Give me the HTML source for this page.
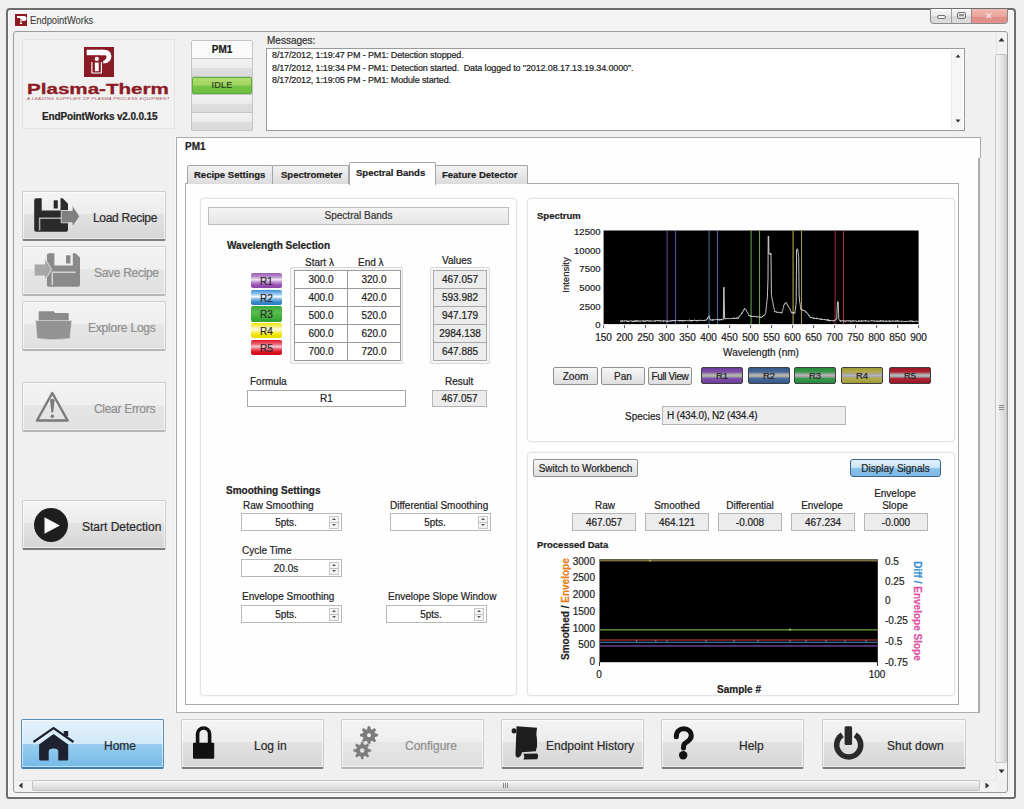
<!DOCTYPE html>
<html><head><meta charset="utf-8">
<style>
*{box-sizing:border-box;margin:0;padding:0}
html,body{width:1024px;height:809px;overflow:hidden;background:#efefef;font-family:"Liberation Sans",sans-serif;color:#222;-webkit-text-stroke:0.2px}
.a{position:absolute}
.t{position:absolute;white-space:nowrap;font-size:10px;line-height:12px;color:#222}
.b{font-weight:bold}
.c{text-align:center}
.win{left:6px;top:8px;width:1009.5px;height:791px;border:2px solid #6e6e6e;border-radius:4px 4px 3px 3px;background:#f3f3f3;box-shadow:inset 0 0 0 1px #fafafa}
.client{left:13px;top:31px;width:995px;height:762px;border:1.5px solid #9c9c9c;border-radius:3px;background:#f0f0f0}
.btn{position:absolute;border:1px solid #cdcdcd;border-bottom:2px solid #7c7c7c;border-radius:2px;background:linear-gradient(#f4f4f4 0,#ececec 46%,#e2e2e2 47%,#d6d6d6 100%);box-shadow:inset 0 0 0 1px rgba(255,255,255,0.55)}
.btn .l{position:absolute;white-space:nowrap;font-size:12px;line-height:14px;color:#2a2a2a}
.dis{border-bottom-color:#b5b5b5;background:linear-gradient(#f3f3f3 0,#efefef 46%,#e6e6e6 47%,#e0e0e0 100%)}
.dis .l{color:#8f8f8f}
.grp{position:absolute;border:1px solid #e4e4e4;border-radius:4px;background:#fefefe;box-shadow:0 0 0 1px #f6f6f6}
.box{position:absolute;border:1px solid #a9a9a9;background:#fff}
.ind{position:absolute;border:1px solid #b5b5b5;background:#ececec;font-size:10px;line-height:15px;text-align:center;color:#222}
.sb{position:absolute;border:1px solid #c0c0c0;border-radius:2px;background:linear-gradient(#f7f7f7,#dedede);font-size:10px;text-align:center;color:#222}
.rb{position:absolute;border:1px solid #666;border-radius:1px;font-size:10px;line-height:16px;text-align:center;color:#222}
</style></head><body>
<div class="a win"></div>
<!-- title bar -->
<svg class="a" style="left:15px;top:14px" width="12" height="12" viewBox="0 0 12 12"><rect x="0" y="0" width="12" height="12" fill="#8e1b22"/><path d="M2 2h7a2.5 2.5 0 0 1 0 5H7v3H5V4H2z" fill="#fff"/><rect x="5.6" y="5" width="0.9" height="4" fill="#8e1b22"/></svg>
<div class="t" style="left:30px;top:13.5px;font-size:11px;color:#3a3a3a;transform:scaleX(0.85);transform-origin:left;-webkit-text-stroke:0.1px">EndpointWorks</div>
<div class="a" style="left:930px;top:9px;width:78px;height:15px;border:1px solid #8c8c8c;border-top:none;border-radius:0 0 4px 4px;overflow:hidden;background:linear-gradient(#fbfbfb,#e8e8e8 50%,#d8d8d8 52%,#dcdcdc)">
  <div class="a" style="left:20px;top:0;width:1px;height:15px;background:#a0a0a0"></div>
  <div class="a" style="left:40px;top:0;width:37px;height:15px;background:linear-gradient(#f0b8b0,#e8a49c 50%,#e08a82 52%,#e4948c);border-left:1px solid #a08080"></div>
  <div class="a" style="left:6px;top:6px;width:9px;height:4px;border:1px solid #707070;border-radius:2px;background:#f4f4f4"></div>
  <div class="a" style="left:26px;top:3px;width:9px;height:7px;border:1px solid #707070;border-radius:2px"></div>
  <div class="a" style="left:28px;top:5px;width:5px;height:2px;border:1px solid #909090"></div>
  <div class="t" style="left:54px;top:1px;font-size:9px;color:#f8e8e8">✕</div>
</div>
<div class="a client"></div>
<!-- right vertical scrollbar -->
<div class="a" style="left:996px;top:33px;width:11px;height:746px;background:#f2f2f2;border-left:1px solid #e4e4e4"></div>
<svg class="a" style="left:998px;top:37px" width="7" height="5"><path d="M0.5,4.5 L3.5,0.8 L6.5,4.5Z" fill="#333"/></svg>
<div class="a" style="left:995px;top:54px;width:12px;height:709px;border:1px solid #c4c4c4;border-radius:2px;background:linear-gradient(90deg,#f8f8f8,#e6e6e6 50%,#d4d4d4)"></div>
<div class="a" style="left:999px;top:405px;width:5px;height:1px;background:#888;box-shadow:0 2px 0 #888,0 4px 0 #888"></div>
<svg class="a" style="left:998px;top:769px" width="7" height="5"><path d="M0.5,0.5 L3.5,4.2 L6.5,0.5Z" fill="#333"/></svg>
<!-- bottom horizontal scrollbar -->
<div class="a" style="left:15px;top:780px;width:981px;height:11px;background:#f2f2f2;border-top:1px solid #e4e4e4"></div>
<svg class="a" style="left:18px;top:782px" width="5" height="7"><path d="M4.5,0.5 L0.8,3.5 L4.5,6.5Z" fill="#333"/></svg>
<div class="a" style="left:32px;top:780px;width:948px;height:11px;border:1px solid #c4c4c4;border-radius:2px;background:linear-gradient(#f8f8f8,#e6e6e6 50%,#d4d4d4)"></div>
<div class="a" style="left:503px;top:783px;width:1px;height:5px;background:#888;box-shadow:2px 0 0 #888,4px 0 0 #888"></div>
<svg class="a" style="left:985px;top:782px" width="5" height="7"><path d="M0.5,0.5 L4.2,3.5 L0.5,6.5Z" fill="#333"/></svg>

<!-- logo panel -->
<div class="a" style="left:22px;top:39px;width:153px;height:90px;border:1px solid #e4e4e4;background:#f1f1f1"></div>
<svg class="a" style="left:83.5px;top:47px" width="30" height="30" viewBox="0 0 30 30"><rect width="30" height="30" fill="#8a1a24"/><rect x="2.7" y="2.7" width="16" height="5.5" fill="#fff"/><path d="M17,2.7 H20.5 C25,2.7 27.4,6 27.4,9.5 C27.4,13 24.5,16.5 19.2,16.5 L19.2,14 C21.5,13 22.5,11.5 22.5,10 C22.5,9 22,8.2 21,8.2 H17Z" fill="#fff"/><path d="M7.9,15 V26 H17.4 V15" fill="none" stroke="#fff" stroke-width="1.1"/><circle cx="12.8" cy="11.9" r="2.1" fill="#fff"/><rect x="10.9" y="15.5" width="3.8" height="8.7" fill="#fff"/></svg>
<div class="t b" style="left:27px;top:80.5px;font-size:14px;line-height:16px;color:#8c1a24;letter-spacing:0px;transform:scaleX(1.47);transform-origin:left;-webkit-text-stroke:0.3px #8c1a24">Plasma-Therm</div>
<div class="t" style="left:27px;top:96px;font-size:4px;line-height:5px;color:#a05058;font-style:italic;letter-spacing:0.3px;transform:scaleX(1.14);transform-origin:left;-webkit-text-stroke:0">A LEADING SUPPLIER OF PLASMA PROCESS EQUIPMENT</div>
<div class="t b" style="left:42px;top:111px;font-size:10px;line-height:12px;color:#222;letter-spacing:-0.15px">EndPointWorks v2.0.0.15</div>

<!-- PM1 status column -->
<div class="a" style="left:191px;top:40px;width:62px;height:91px;border:1px solid #c4c4c4;border-radius:2px;background:#c4c4c4"></div>
<div class="a c b" style="left:192px;top:41px;width:60px;height:17px;background:#fafafa;font-size:10px;line-height:18px;color:#1a1a1a">PM1</div>
<div class="a" style="left:192px;top:59px;width:60px;height:17px;background:linear-gradient(#f2f2f2,#ececec 50%,#dedede 52%,#dadada)"></div>
<div class="a c" style="left:192px;top:77px;width:60px;height:17px;border:1px solid #58b03a;border-radius:2px;background:linear-gradient(#b0dc70,#a0d460 48%,#78c448 52%,#6cc040);font-size:9px;line-height:15px;color:#2a3a20;letter-spacing:0.3px">IDLE</div>
<div class="a" style="left:192px;top:95px;width:60px;height:17px;background:linear-gradient(#f2f2f2,#ececec 50%,#dedede 52%,#dadada)"></div>
<div class="a" style="left:192px;top:113px;width:60px;height:17px;background:linear-gradient(#f2f2f2,#ececec 50%,#dedede 52%,#dadada)"></div>

<!-- messages -->
<div class="t" style="left:267px;top:35px;font-size:10px;color:#333">Messages:</div>
<div class="box" style="left:266px;top:48px;width:699px;height:83px;border:1.5px solid #9a9a9a"></div>
<div class="a" style="left:951px;top:50px;width:12px;height:79px;background:#f6f6f6;border-left:1px solid #ececec"></div>
<svg class="a" style="left:955px;top:54px" width="6" height="4"><path d="M0.5,3.5 L3,0.5 L5.5,3.5Z" fill="#333"/></svg>
<svg class="a" style="left:955px;top:119px" width="6" height="4"><path d="M0.5,0.5 L3,3.5 L5.5,0.5Z" fill="#333"/></svg>
<div class="t" style="left:272px;top:49px;font-size:9px;line-height:12.5px;color:#222;letter-spacing:-0.13px">8/17/2012, 1:19:47 PM - PM1: Detection stopped.<br>8/17/2012, 1:19:34 PM - PM1: Detection started.&nbsp; Data logged to "2012.08.17.13.19.34.0000".<br>8/17/2012, 1:19:05 PM - PM1: Module started.</div>
<!-- left buttons -->
<div class="btn" style="left:22px;top:191px;width:144px;height:50px"><div class="l" style="left:70px;top:19px;letter-spacing:-0.3px">Load Recipe</div></div>
<div class="btn dis" style="left:22px;top:246px;width:144px;height:50px"><div class="l" style="left:71px;top:19px;letter-spacing:-0.3px">Save Recipe</div></div>
<div class="btn dis" style="left:22px;top:301px;width:144px;height:50px"><div class="l" style="left:65px;top:19px;letter-spacing:-0.2px">Explore Logs</div></div>
<div class="btn dis" style="left:22px;top:382px;width:144px;height:50px"><div class="l" style="left:71px;top:19px;letter-spacing:-0.3px">Clear Errors</div></div>
<div class="btn" style="left:22px;top:500px;width:144px;height:50px"><div class="l" style="left:59px;top:19px">Start Detection</div></div>
<!-- bottom buttons -->
<div class="btn" style="left:21px;top:719px;width:143px;height:50px;border:1px solid #5a8cb4;border-bottom:2px solid #3f7eb2;background:linear-gradient(#e6f3fb 0,#d0e8f7 50%,#98cdf0 52%,#74bae8 100%)"><div class="l" style="left:82px;top:19px">Home</div></div>
<div class="btn" style="left:181px;top:719px;width:143px;height:50px"><div class="l" style="left:72px;top:19px">Log in</div></div>
<div class="btn dis" style="left:341px;top:719px;width:143px;height:50px"><div class="l" style="left:63px;top:19px">Configure</div></div>
<div class="btn" style="left:501px;top:719px;width:143px;height:50px"><div class="l" style="left:44px;top:19px">Endpoint History</div></div>
<div class="btn" style="left:661px;top:719px;width:143px;height:50px"><div class="l" style="left:77px;top:19px">Help</div></div>
<div class="btn" style="left:822px;top:719px;width:144px;height:50px"><div class="l" style="left:64px;top:19px">Shut down</div></div>
<svg class="a" style="left:0;top:0" width="1024" height="809" viewBox="0 0 1024 809">
<g id="load">
<path d="M36.2,198.2 H41.7 V210.5 H60.5 V198.2 H62.6 L68,203.7 V229.7 Q68,231.7 66,231.7 H36.2 Q34.2,231.7 34.2,229.7 V200.2 Q34.2,198.2 36.2,198.2Z" fill="#2a2a2a"/>
<rect x="53.7" y="200.3" width="4.1" height="8.2" fill="#2a2a2a"/>
<path d="M39.6,230.5 V218.3 H62" stroke="#b0b0b0" stroke-width="1.5" fill="none"/>
<path d="M61.2,210.5 H72.2 V205 L79.7,216.3 L72.2,227.6 V222.8 H61.2Z" fill="#808080" stroke="#f0f0f0" stroke-width="0.8"/>
</g>
<g id="save">
<path d="M48.9,253.2 H54.4 V265.5 H72.8 V253.2 H75.6 L80,257.6 V284.7 Q80,286.7 78,286.7 H48.9 Q46.9,286.7 46.9,284.7 V255.2 Q46.9,253.2 48.9,253.2Z" fill="#8a8a8a"/>
<rect x="66" y="255.3" width="4.5" height="8.2" fill="#8a8a8a"/>
<path d="M52.3,285 V272.3 H75.6" stroke="#d4d4d4" stroke-width="1.5" fill="none"/>
<path d="M34.2,264.1 H44.8 V258 L51.7,269.3 L44.8,280.5 V276.1 H34.2Z" fill="#a8a8a8" stroke="#ececec" stroke-width="0.8"/>
</g>
<g id="folder" fill="#8c8c8c">
<path d="M39.5,311.3 H53.8 L55,313 H67.7 Q68.7,313 68.7,314 V321 H38.7 V312.3 Q38.7,311.3 39.5,311.3Z"/>
<path d="M35.6,320.5 H71.8 L70,338.5 Q53,341 37,338.5Z" fill="#939393" stroke="#e8e8e8" stroke-width="0.6"/>
</g>
<g id="warn">
<path d="M52.3,393 L37,420.5 H67.6Z" fill="none" stroke="#7a7a7a" stroke-width="2.4" stroke-linejoin="round"/>
<path d="M50,400.5 Q50,398.8 52.3,398.8 Q54.6,398.8 54.6,400.5 L53.2,412.5 H51.4Z" fill="#7a7a7a"/>
<circle cx="52.3" cy="416.2" r="1.7" fill="#7a7a7a"/>
</g>
<g id="play">
<circle cx="51" cy="525" r="17" fill="#1e1e1e"/>
<path d="M44.5,517.3 V533.7 L59.9,525.5Z" fill="#fafafa"/>
</g>
<g id="home" fill="#1e2230">
<path d="M33.5,742 L53.5,728 L73.5,742" fill="none" stroke="#1e2230" stroke-width="2.2" stroke-linejoin="miter"/>
<path d="M53.5,728 L33.5,742" fill="none" stroke="#f4fafd" stroke-width="0.8" transform="translate(0,2.6)"/>
<rect x="63.7" y="731" width="4.5" height="5" />
<path d="M53.5,734 L68.2,744.4 V759 Q68.2,760.5 66.7,760.5 H58.3 V751.5 Q58.3,748.5 53.5,748.5 Q48.7,748.5 48.7,751.5 V760.5 H40.6 Q39.1,760.5 39.1,759 V744.4Z"/>
</g>
<g id="lock">
<path d="M197.6,743 V734 A6,6 0 0 1 209.6,734 V743" fill="none" stroke="#111" stroke-width="3.6"/>
<rect x="193" y="742.7" width="21.2" height="16" rx="0.8" fill="#111"/>
</g>
<g id="gears" fill="#7c7c7c">
<path fill-rule="evenodd" d="M375.02,733.34 L377.92,734.03 L377.92,736.37 L375.02,737.06 L374.57,738.14 L376.14,740.69 L374.49,742.34 L371.94,740.77 L370.86,741.22 L370.17,744.12 L367.83,744.12 L367.14,741.22 L366.06,740.77 L363.51,742.34 L361.86,740.69 L363.43,738.14 L362.98,737.06 L360.08,736.37 L360.08,734.03 L362.98,733.34 L363.43,732.26 L361.86,729.71 L363.51,728.06 L366.06,729.63 L367.14,729.18 L367.83,726.28 L370.17,726.28 L370.86,729.18 L371.94,729.63 L374.49,728.06 L376.14,729.71 L374.57,732.26Z M371,735.2 A2,2 0 1 0 367,735.2 A2,2 0 1 0 371,735.2Z"/>
<path fill-rule="evenodd" d="M368.31,748.61 L371.32,749.31 L371.32,751.69 L368.31,752.39 L367.86,753.49 L369.49,756.11 L367.81,757.79 L365.19,756.16 L364.09,756.61 L363.39,759.62 L361.01,759.62 L360.31,756.61 L359.21,756.16 L356.59,757.79 L354.91,756.11 L356.54,753.49 L356.09,752.39 L353.08,751.69 L353.08,749.31 L356.09,748.61 L356.54,747.51 L354.91,744.89 L356.59,743.21 L359.21,744.84 L360.31,744.39 L361.01,741.38 L363.39,741.38 L364.09,744.39 L365.19,744.84 L367.81,743.21 L369.49,744.89 L367.86,747.51Z M364.2,750.5 A2,2 0 1 0 360.2,750.5 A2,2 0 1 0 364.2,750.5Z" stroke="#e6e6e6" stroke-width="0.6"/>
</g>
<g id="scroll" fill="#1e1e1e">
<path d="M516.5,726.3 L537,727.8 Q535.8,734 537,740 Q537.8,746 535.8,751.3 L522,752.3 Q521,756.5 518.5,757.5 Q515.5,758 515.5,754 L516.5,726.3Z"/>
<ellipse cx="514" cy="730.8" rx="2.4" ry="2.6"/>
<path d="M523.5,753.8 L537.3,753.4 Q539,756.4 537,759.2 L523.5,759.6 Q525,756.6 523.5,753.8Z"/>
</g>
<g id="help">
<path d="M676.3,736.8 C676.3,731.5 679.8,728.8 683.8,728.8 C688.3,728.8 691.3,731.8 691.3,735.8 C691.3,740 687.8,741.3 685,743.3 C683.7,744.3 683.5,745.3 683.5,748" fill="none" stroke="#111" stroke-width="5" stroke-linecap="round"/>
<circle cx="683.2" cy="755.3" r="4.2" fill="#111"/>
</g>
<g id="power">
<path d="M842.3,734.8 A12,12 0 1 0 855.1,734.8" fill="none" stroke="#2a2a2a" stroke-width="5.6"/>
<rect x="844.6" y="726.3" width="7.5" height="18.7" rx="1.5" fill="#2a2a2a"/>
</g>
</svg>
<!-- PM1 panel -->
<div class="a" style="left:176px;top:137px;width:805px;height:576px;border:1.5px solid #acacac;border-right:none;background:#fefefe;box-shadow:-1px 0 0 #f8f8f8"></div><div class="a" style="left:979.5px;top:137px;width:1.5px;height:20.5px;background:#acacac"></div><div class="a" style="left:978px;top:157.5px;width:1.5px;height:555.5px;background:#acacac"></div><div class="a" style="left:979.5px;top:157.5px;width:1.5px;height:555.5px;background:#f0f0f0"></div>
<div class="t b" style="left:185px;top:141px;font-size:10px">PM1</div>
<!-- tabs -->
<div class="a" style="left:185px;top:183px;width:774px;height:522px;border:1.5px solid #a8a8a8;background:#fefefe"></div>
<div class="a" style="left:187px;top:165px;width:86px;height:19px;border:1px solid #a4a4a4;border-bottom:none;border-radius:2px 2px 0 0;background:linear-gradient(#f2f2f2,#dcdcdc)"></div>
<div class="t b" style="left:194px;top:169px;font-size:9.5px">Recipe Settings</div>
<div class="a" style="left:272px;top:165px;width:77px;height:19px;border:1px solid #a4a4a4;border-bottom:none;border-radius:2px 2px 0 0;background:linear-gradient(#f2f2f2,#dcdcdc)"></div>
<div class="t b" style="left:281px;top:169px;font-size:9.5px">Spectrometer</div>
<div class="a" style="left:435px;top:165px;width:93px;height:19px;border:1px solid #a4a4a4;border-bottom:none;border-radius:2px 2px 0 0;background:linear-gradient(#f2f2f2,#dcdcdc)"></div>
<div class="t b" style="left:442px;top:169px;font-size:9.5px">Feature Detector</div>
<div class="a" style="left:349px;top:162px;width:87px;height:23px;border:1px solid #a4a4a4;border-bottom:none;border-radius:2px 2px 0 0;background:#fefefe"></div>
<div class="t b" style="left:356px;top:167px;font-size:9.5px">Spectral Bands</div>

<!-- left group -->
<div class="grp" style="left:200px;top:198px;width:317px;height:498px"></div>
<div class="a c" style="left:208px;top:207px;width:301px;height:18px;border:1px solid #bdbdbd;background:linear-gradient(#f4f4f4,#e6e6e6);font-size:10px;line-height:16px;color:#333">Spectral Bands</div>
<div class="t b" style="left:227px;top:240px">Wavelength Selection</div>
<div class="t" style="left:305px;top:257px">Start λ</div>
<div class="t" style="left:358px;top:257px">End λ</div>
<div class="t" style="left:442px;top:255px">Values</div>
<!-- band color labels -->
<div class="rb" style="left:251px;top:272.5px;width:31px;height:15.5px;border:none;border-radius:2px;line-height:18px;font-size:10px;color:#2a2a2a;background:linear-gradient(#9c58b8,#b890cc 25%,#f2e6f2 45%,#c898d8 58%,#9a50b4 80%,#8c44a8)">R1</div>
<div class="rb" style="left:251px;top:289.5px;width:31px;height:15.5px;border:none;border-radius:2px;line-height:18px;font-size:10px;color:#2a2a2a;background:linear-gradient(#3c8cd4,#98c8ee 28%,#ffffff 45%,#8cc0ea 58%,#3a88cc 80%,#2e7cc0)">R2</div>
<div class="rb" style="left:251px;top:306.3px;width:31px;height:15.5px;border:none;border-radius:2px;line-height:18px;font-size:10px;color:#2a2a2a;background:linear-gradient(#3aaa3a,#58bc50 40%,#48b440 60%,#30a030)">R3</div>
<div class="rb" style="left:251px;top:322.7px;width:31px;height:15.5px;border:none;border-radius:2px;line-height:18px;font-size:10px;color:#2a2a2a;background:linear-gradient(#f0e400,#f8f090 28%,#fffce8 45%,#f8f060 60%,#f0e400 80%,#e8dc00)">R4</div>
<div class="rb" style="left:251px;top:339.7px;width:31px;height:15.5px;border:none;border-radius:2px;line-height:18px;font-size:10px;color:#2a2a2a;background:linear-gradient(#dc1424,#ec6878 28%,#f6ccd4 45%,#ec6070 60%,#dc1020 80%,#d00c1c)">R5</div>
<!-- table -->
<div class="a" style="left:290px;top:267px;width:113px;height:97px;border:1px solid #d8d8d8;border-radius:2px;background:#f6f6f6"></div>
<div class="a" style="left:430px;top:267px;width:60px;height:97px;border:1px solid #d8d8d8;border-radius:2px;background:#f6f6f6"></div>
<div id="tbl"></div>
<div class="box c" style="left:294px;top:270px;width:54px;height:19px;border-color:#9a9a9a;font-size:10px;line-height:17px">300.0</div>
<div class="box c" style="left:347px;top:270px;width:54px;height:19px;border-color:#9a9a9a;font-size:10px;line-height:17px">320.0</div>
<div class="ind" style="left:433px;top:270px;width:54px;height:19px;border-color:#a8a8a8;line-height:17px">467.057</div>
<div class="box c" style="left:294px;top:288px;width:54px;height:19px;border-color:#9a9a9a;font-size:10px;line-height:17px">400.0</div>
<div class="box c" style="left:347px;top:288px;width:54px;height:19px;border-color:#9a9a9a;font-size:10px;line-height:17px">420.0</div>
<div class="ind" style="left:433px;top:288px;width:54px;height:19px;border-color:#a8a8a8;line-height:17px">593.982</div>
<div class="box c" style="left:294px;top:306px;width:54px;height:19px;border-color:#9a9a9a;font-size:10px;line-height:17px">500.0</div>
<div class="box c" style="left:347px;top:306px;width:54px;height:19px;border-color:#9a9a9a;font-size:10px;line-height:17px">520.0</div>
<div class="ind" style="left:433px;top:306px;width:54px;height:19px;border-color:#a8a8a8;line-height:17px">947.179</div>
<div class="box c" style="left:294px;top:324px;width:54px;height:19px;border-color:#9a9a9a;font-size:10px;line-height:17px">600.0</div>
<div class="box c" style="left:347px;top:324px;width:54px;height:19px;border-color:#9a9a9a;font-size:10px;line-height:17px">620.0</div>
<div class="ind" style="left:433px;top:324px;width:54px;height:19px;border-color:#a8a8a8;line-height:17px">2984.138</div>
<div class="box c" style="left:294px;top:342px;width:54px;height:19px;border-color:#9a9a9a;font-size:10px;line-height:17px">700.0</div>
<div class="box c" style="left:347px;top:342px;width:54px;height:19px;border-color:#9a9a9a;font-size:10px;line-height:17px">720.0</div>
<div class="ind" style="left:433px;top:342px;width:54px;height:19px;border-color:#a8a8a8;line-height:17px">647.885</div>
<div class="t" style="left:250px;top:376px">Formula</div>
<div class="box c" style="left:247px;top:390px;width:159px;height:17px;border-color:#a8a8a8;font-size:10px;line-height:15px">R1</div>
<div class="t" style="left:445px;top:376px">Result</div>
<div class="ind" style="left:432px;top:390px;width:55px;height:17px;line-height:15px">467.057</div>

<div class="t b" style="left:226px;top:485px">Smoothing Settings</div>
<div class="t" style="left:243px;top:500px">Raw Smoothing</div>
<div class="t" style="left:390px;top:500px">Differential Smoothing</div>
<div class="t" style="left:242px;top:545px">Cycle Time</div>
<div class="t" style="left:242px;top:591px">Envelope Smoothing</div>
<div class="t" style="left:388px;top:591px">Envelope Slope Window</div>
<div class="box" style="left:241px;top:513px;width:101px;height:18px;border:1.5px solid #b8b8b8"><div class="t c" style="left:0;top:2.5px;width:88px">5pts.</div><div class="a" style="left:87px;top:1.5px;width:10px;height:13px;border:1px solid #c8c8c8;background:#f4f4f4"></div><div class="a" style="left:89.5px;top:4px;width:0;height:0;border:2.5px solid transparent;border-bottom:2.5px solid #556;border-top:none"></div><div class="a" style="left:89.5px;top:10px;width:0;height:0;border:2.5px solid transparent;border-top:2.5px solid #556;border-bottom:none"></div><div class="a" style="left:88px;top:7.5px;width:8px;height:1px;background:#c0c0c0"></div></div>
<div class="box" style="left:390px;top:513px;width:101px;height:18px;border:1.5px solid #b8b8b8"><div class="t c" style="left:0;top:2.5px;width:88px">5pts.</div><div class="a" style="left:87px;top:1.5px;width:10px;height:13px;border:1px solid #c8c8c8;background:#f4f4f4"></div><div class="a" style="left:89.5px;top:4px;width:0;height:0;border:2.5px solid transparent;border-bottom:2.5px solid #556;border-top:none"></div><div class="a" style="left:89.5px;top:10px;width:0;height:0;border:2.5px solid transparent;border-top:2.5px solid #556;border-bottom:none"></div><div class="a" style="left:88px;top:7.5px;width:8px;height:1px;background:#c0c0c0"></div></div>
<div class="box" style="left:241px;top:559px;width:101px;height:18px;border:1.5px solid #b8b8b8"><div class="t c" style="left:0;top:2.5px;width:88px">20.0s</div><div class="a" style="left:87px;top:1.5px;width:10px;height:13px;border:1px solid #c8c8c8;background:#f4f4f4"></div><div class="a" style="left:89.5px;top:4px;width:0;height:0;border:2.5px solid transparent;border-bottom:2.5px solid #556;border-top:none"></div><div class="a" style="left:89.5px;top:10px;width:0;height:0;border:2.5px solid transparent;border-top:2.5px solid #556;border-bottom:none"></div><div class="a" style="left:88px;top:7.5px;width:8px;height:1px;background:#c0c0c0"></div></div>
<div class="box" style="left:241px;top:605px;width:101px;height:18px;border:1.5px solid #b8b8b8"><div class="t c" style="left:0;top:2.5px;width:88px">5pts.</div><div class="a" style="left:87px;top:1.5px;width:10px;height:13px;border:1px solid #c8c8c8;background:#f4f4f4"></div><div class="a" style="left:89.5px;top:4px;width:0;height:0;border:2.5px solid transparent;border-bottom:2.5px solid #556;border-top:none"></div><div class="a" style="left:89.5px;top:10px;width:0;height:0;border:2.5px solid transparent;border-top:2.5px solid #556;border-bottom:none"></div><div class="a" style="left:88px;top:7.5px;width:8px;height:1px;background:#c0c0c0"></div></div>
<div class="box" style="left:386px;top:605px;width:101px;height:18px;border:1.5px solid #b8b8b8"><div class="t c" style="left:0;top:2.5px;width:88px">5pts.</div><div class="a" style="left:87px;top:1.5px;width:10px;height:13px;border:1px solid #c8c8c8;background:#f4f4f4"></div><div class="a" style="left:89.5px;top:4px;width:0;height:0;border:2.5px solid transparent;border-bottom:2.5px solid #556;border-top:none"></div><div class="a" style="left:89.5px;top:10px;width:0;height:0;border:2.5px solid transparent;border-top:2.5px solid #556;border-bottom:none"></div><div class="a" style="left:88px;top:7.5px;width:8px;height:1px;background:#c0c0c0"></div></div>
<!-- spectrum group -->
<div class="grp" style="left:527px;top:198px;width:428px;height:244px"></div>
<div class="t b" style="left:537px;top:210px;font-size:9.5px">Spectrum</div>
<div class="t" style="right:423.5px;top:225.8px;text-align:right;font-size:9.5px">12500</div>
<div class="t" style="right:423.5px;top:244.5px;text-align:right;font-size:9.5px">10000</div>
<div class="t" style="right:423.5px;top:263.2px;text-align:right;font-size:9.5px">7500</div>
<div class="t" style="right:423.5px;top:282.0px;text-align:right;font-size:9.5px">5000</div>
<div class="t" style="right:423.5px;top:300.7px;text-align:right;font-size:9.5px">2500</div>
<div class="t" style="right:423.5px;top:319.4px;text-align:right;font-size:9.5px">0</div>
<div class="t" style="left:541px;top:269px;width:50px;text-align:center;transform:rotate(-90deg);font-size:9.5px">Intensity</div>
<svg class="a" style="left:560px;top:220px" width="380" height="120" viewBox="560 220 380 120"><rect x="603.6" y="230.5" width="315.0" height="93.60000000000002" fill="#000"/><line x1="667.1" y1="230.5" x2="667.1" y2="324.1" stroke="#6c3c98" stroke-width="1.1"/><line x1="675.5" y1="230.5" x2="675.5" y2="324.1" stroke="#5c4c9c" stroke-width="1.1"/><line x1="709.1" y1="230.5" x2="709.1" y2="324.1" stroke="#3c6498" stroke-width="1.1"/><line x1="717.5" y1="230.5" x2="717.5" y2="324.1" stroke="#4a64a0" stroke-width="1.1"/><line x1="751.1" y1="230.5" x2="751.1" y2="324.1" stroke="#5c9c44" stroke-width="1.1"/><line x1="759.5" y1="230.5" x2="759.5" y2="324.1" stroke="#64a040" stroke-width="1.1"/><line x1="793.1" y1="230.5" x2="793.1" y2="324.1" stroke="#b0a848" stroke-width="1.1"/><line x1="801.5" y1="230.5" x2="801.5" y2="324.1" stroke="#a09050" stroke-width="1.1"/><line x1="835.1" y1="230.5" x2="835.1" y2="324.1" stroke="#982838" stroke-width="1.1"/><line x1="843.5" y1="230.5" x2="843.5" y2="324.1" stroke="#a83040" stroke-width="1.1"/><polyline points="620.4,320.5 620.6,321.9 620.8,321.0 621.0,321.3 621.2,321.2 621.5,321.2 621.7,321.7 621.9,321.2 622.1,321.4 622.3,320.1 622.5,321.0 622.7,321.2 622.9,321.2 623.1,321.3 623.3,321.4 623.6,321.2 623.8,320.9 624.0,321.2 624.2,320.8 624.4,321.2 624.6,321.1 624.8,320.6 625.0,320.9 625.2,321.2 625.4,321.1 625.6,320.9 625.9,320.5 626.1,321.2 626.3,321.2 626.5,320.8 626.7,321.3 626.9,321.2 627.1,320.8 627.3,320.9 627.5,321.1 627.8,320.9 628.0,321.9 628.2,320.8 628.4,321.4 628.6,321.6 628.8,321.0 629.0,320.9 629.2,321.2 629.4,321.4 629.6,321.1 629.9,321.1 630.1,320.7 630.3,320.8 630.5,321.0 630.7,320.7 630.9,321.1 631.1,321.3 631.3,320.9 631.5,320.9 631.7,321.1 632.0,321.3 632.2,321.0 632.4,321.8 632.6,320.9 632.8,320.9 633.0,321.6 633.2,321.0 633.4,321.4 633.6,320.8 633.8,321.7 634.1,321.3 634.3,320.8 634.5,320.7 634.7,321.7 634.9,321.2 635.1,321.0 635.3,321.2 635.5,320.6 635.7,321.4 635.9,320.9 636.1,321.4 636.4,320.6 636.6,321.1 636.8,321.2 637.0,321.6 637.2,320.5 637.4,320.8 637.6,320.8 637.8,320.7 638.0,320.9 638.2,321.2 638.5,321.3 638.7,321.3 638.9,320.6 639.1,321.5 639.3,321.2 639.5,321.1 639.7,321.0 639.9,320.9 640.1,321.4 640.4,321.6 640.6,321.0 640.8,320.7 641.0,320.8 641.2,321.0 641.4,321.1 641.6,320.9 641.8,321.1 642.0,320.8 642.2,321.3 642.5,321.0 642.7,321.1 642.9,320.9 643.1,321.0 643.3,320.3 643.5,320.6 643.7,320.6 643.9,321.6 644.1,321.1 644.3,321.2 644.6,320.9 644.8,321.7 645.0,320.7 645.2,320.7 645.4,321.4 645.6,321.3 645.8,321.3 646.0,321.0 646.2,320.8 646.4,320.4 646.6,321.1 646.9,320.8 647.1,321.0 647.3,320.5 647.5,320.8 647.7,320.6 647.9,321.3 648.1,321.1 648.3,321.3 648.5,320.6 648.8,320.8 649.0,321.1 649.2,321.1 649.4,320.9 649.6,321.2 649.8,321.3 650.0,320.9 650.2,320.3 650.4,321.1 650.6,321.2 650.9,321.4 651.1,321.4 651.3,320.8 651.5,320.7 651.7,321.0 651.9,320.9 652.1,321.0 652.3,321.0 652.5,321.5 652.7,321.1 653.0,321.0 653.2,321.2 653.4,321.1 653.6,321.2 653.8,321.1 654.0,320.7 654.2,321.1 654.4,321.0 654.6,320.8 654.8,320.8 655.1,320.5 655.3,321.6 655.5,320.7 655.7,321.1 655.9,320.9 656.1,320.7 656.3,320.7 656.5,320.7 656.7,320.9 656.9,320.5 657.1,321.1 657.4,321.0 657.6,320.7 657.8,321.1 658.0,320.3 658.2,320.7 658.4,320.3 658.6,321.0 658.8,321.1 659.0,320.9 659.2,320.8 659.5,321.2 659.7,320.9 659.9,321.0 660.1,320.5 660.3,321.2 660.5,320.7 660.7,321.2 660.9,321.3 661.1,321.2 661.4,321.3 661.6,320.9 661.8,320.7 662.0,320.9 662.2,320.8 662.4,320.5 662.6,320.9 662.8,320.9 663.0,321.0 663.2,321.4 663.5,320.7 663.7,321.5 663.9,320.8 664.1,321.0 664.3,320.6 664.5,321.0 664.7,321.2 664.9,320.9 665.1,321.1 665.3,321.0 665.6,320.9 665.8,321.0 666.0,321.0 666.2,321.2 666.4,321.0 666.6,321.6 666.8,321.0 667.0,321.3 667.2,320.6 667.4,320.6 667.6,321.5 667.9,320.9 668.1,321.0 668.3,321.2 668.5,320.8 668.7,321.1 668.9,321.4 669.1,321.0 669.3,321.0 669.5,320.9 669.8,321.3 670.0,320.7 670.2,320.7 670.4,321.2 670.6,321.1 670.8,320.9 671.0,321.1 671.2,320.4 671.4,320.8 671.6,321.2 671.9,321.1 672.1,320.9 672.3,320.2 672.5,320.9 672.7,320.8 672.9,320.7 673.1,320.9 673.3,320.2 673.5,321.0 673.7,320.6 674.0,320.8 674.2,320.7 674.4,321.2 674.6,320.3 674.8,320.9 675.0,320.8 675.2,321.1 675.4,321.0 675.6,320.7 675.8,320.5 676.1,320.6 676.3,320.4 676.5,320.6 676.7,320.8 676.9,320.5 677.1,320.6 677.3,320.8 677.5,320.6 677.7,320.4 677.9,320.7 678.1,320.9 678.4,320.6 678.6,320.2 678.8,320.8 679.0,320.8 679.2,320.8 679.4,320.4 679.6,321.3 679.8,320.6 680.0,320.4 680.2,321.0 680.5,320.3 680.7,320.6 680.9,320.9 681.1,320.7 681.3,321.2 681.5,320.9 681.7,320.2 681.9,321.0 682.1,320.2 682.4,320.7 682.6,320.4 682.8,320.7 683.0,321.4 683.2,320.9 683.4,320.6 683.6,321.0 683.8,321.1 684.0,320.6 684.2,320.9 684.5,321.2 684.7,320.9 684.9,320.4 685.1,320.8 685.3,320.4 685.5,320.2 685.7,320.7 685.9,321.0 686.1,321.1 686.3,320.7 686.6,320.4 686.8,320.6 687.0,320.5 687.2,320.8 687.4,320.6 687.6,320.8 687.8,320.7 688.0,321.0 688.2,321.1 688.4,320.8 688.6,321.0 688.9,320.9 689.1,320.4 689.3,320.6 689.5,319.7 689.7,320.3 689.9,320.8 690.1,320.4 690.3,320.5 690.5,320.8 690.8,320.3 691.0,320.8 691.2,321.5 691.4,320.3 691.6,320.8 691.8,320.1 692.0,320.8 692.2,320.9 692.4,320.1 692.6,320.9 692.9,320.5 693.1,320.1 693.3,320.5 693.5,320.6 693.7,320.5 693.9,320.3 694.1,320.8 694.3,320.4 694.5,320.4 694.7,319.8 695.0,320.6 695.2,320.8 695.4,320.3 695.6,320.6 695.8,320.4 696.0,320.5 696.2,320.2 696.4,320.7 696.6,320.5 696.8,321.3 697.1,320.8 697.3,320.0 697.5,320.7 697.7,320.7 697.9,320.9 698.1,320.3 698.3,320.4 698.5,320.8 698.7,320.3 698.9,320.4 699.1,320.2 699.4,320.7 699.6,319.9 699.8,320.3 700.0,320.5 700.2,320.6 700.4,320.5 700.6,320.2 700.8,320.5 701.0,320.1 701.2,320.3 701.5,320.0 701.7,320.2 701.9,320.4 702.1,321.0 702.3,320.3 702.5,320.2 702.7,320.4 702.9,320.2 703.1,320.5 703.4,320.5 703.6,320.7 703.8,320.0 704.0,320.3 704.2,320.5 704.4,320.8 704.6,320.4 704.8,319.9 705.0,320.2 705.2,320.6 705.5,319.9 705.7,319.9 705.9,320.1 706.1,320.1 706.3,320.0 706.5,320.2 706.7,319.7 706.9,319.8 707.1,318.8 707.3,318.8 707.6,317.9 707.8,318.7 708.0,317.5 708.2,317.1 708.4,317.1 708.6,316.5 708.8,316.0 709.0,315.7 709.2,316.7 709.4,317.3 709.6,317.6 709.9,318.2 710.1,319.2 710.3,319.9 710.5,319.8 710.7,319.6 710.9,320.2 711.1,320.3 711.3,319.8 711.5,320.2 711.8,320.0 712.0,319.8 712.2,319.7 712.4,320.2 712.6,319.6 712.8,320.4 713.0,319.7 713.2,320.3 713.4,320.2 713.6,319.6 713.9,319.9 714.1,320.1 714.3,319.9 714.5,319.7 714.7,319.8 714.9,319.8 715.1,319.5 715.3,320.0 715.5,319.9 715.7,319.9 716.0,319.4 716.2,319.5 716.4,319.4 716.6,319.8 716.8,319.8 717.0,319.5 717.2,319.9 717.4,319.5 717.6,319.5 717.8,319.9 718.1,319.8 718.3,319.8 718.5,319.2 718.7,318.9 718.9,319.7 719.1,319.7 719.3,320.4 719.5,319.6 719.7,319.7 719.9,320.0 720.1,319.4 720.4,320.1 720.6,319.7 720.8,319.6 721.0,320.0 721.2,319.4 721.4,319.3 721.6,320.1 721.8,320.1 722.0,319.5 722.2,319.6 722.5,320.0 722.7,319.7 722.9,319.6 723.1,319.7 723.3,319.4 723.5,308.8 723.7,297.8 723.9,287.2 724.1,297.8 724.4,308.1 724.6,318.5 724.8,318.6 725.0,319.2 725.2,318.6 725.4,318.8 725.6,318.3 725.8,318.8 726.0,318.6 726.2,318.7 726.5,318.2 726.7,318.7 726.9,318.8 727.1,318.6 727.3,318.8 727.5,318.6 727.7,318.7 727.9,318.6 728.1,318.1 728.3,318.8 728.6,318.6 728.8,318.7 729.0,318.4 729.2,319.0 729.4,318.8 729.6,318.6 729.8,318.4 730.0,318.6 730.2,318.7 730.4,318.8 730.6,318.4 730.9,318.1 731.1,318.4 731.3,318.4 731.5,318.3 731.7,318.7 731.9,318.5 732.1,318.5 732.3,318.3 732.5,318.4 732.8,318.8 733.0,318.1 733.2,317.9 733.4,318.4 733.6,318.2 733.8,318.3 734.0,318.1 734.2,318.8 734.4,317.8 734.6,318.4 734.9,317.9 735.1,318.2 735.3,318.4 735.5,318.3 735.7,318.0 735.9,318.5 736.1,318.3 736.3,318.3 736.5,318.7 736.7,317.8 737.0,318.0 737.2,318.2 737.4,317.8 737.6,318.4 737.8,318.1 738.0,317.6 738.2,317.6 738.4,318.3 738.6,318.3 738.8,317.4 739.0,316.5 739.3,316.7 739.5,316.3 739.7,315.8 739.9,316.0 740.1,315.4 740.3,315.0 740.5,314.8 740.7,314.6 740.9,314.6 741.2,314.0 741.4,314.0 741.6,313.3 741.8,312.6 742.0,313.4 742.2,313.5 742.4,312.6 742.6,312.0 742.8,311.4 743.0,311.0 743.2,311.2 743.5,310.9 743.7,309.9 743.9,310.2 744.1,309.2 744.3,309.2 744.5,308.5 744.7,308.2 744.9,308.5 745.1,308.8 745.4,309.6 745.6,309.5 745.8,309.9 746.0,310.2 746.2,310.2 746.4,311.0 746.6,311.4 746.8,311.7 747.0,311.9 747.2,311.9 747.5,312.7 747.7,312.5 747.9,313.2 748.1,313.7 748.3,314.4 748.5,314.3 748.7,314.5 748.9,315.6 749.1,315.1 749.3,315.4 749.5,315.8 749.8,315.8 750.0,315.2 750.2,315.6 750.4,316.3 750.6,316.0 750.8,316.1 751.0,316.1 751.2,316.8 751.4,315.9 751.7,316.3 751.9,316.1 752.1,316.2 752.3,316.0 752.5,316.3 752.7,316.5 752.9,316.1 753.1,315.9 753.3,316.4 753.5,316.0 753.8,316.3 754.0,316.6 754.2,316.0 754.4,316.7 754.6,316.2 754.8,316.7 755.0,316.4 755.2,316.9 755.4,316.8 755.6,316.3 755.9,316.6 756.1,316.7 756.3,316.8 756.5,316.6 756.7,317.2 756.9,317.1 757.1,316.8 757.3,317.1 757.5,317.0 757.7,316.9 758.0,316.9 758.2,317.0 758.4,316.4 758.6,316.7 758.8,316.6 759.0,317.0 759.2,317.2 759.4,317.5 759.6,317.2 759.8,317.7 760.0,317.3 760.3,316.9 760.5,316.7 760.7,316.9 760.9,317.5 761.1,317.1 761.3,317.5 761.5,317.1 761.7,317.4 761.9,317.1 762.2,316.4 762.4,316.7 762.6,316.1 762.8,316.6 763.0,316.5 763.2,315.8 763.4,315.5 763.6,316.0 763.8,315.7 764.0,315.9 764.2,315.4 764.5,314.8 764.7,314.8 764.9,314.5 765.1,314.4 765.3,313.5 765.5,313.0 765.7,312.7 765.9,310.7 766.1,309.1 766.4,306.2 766.6,304.6 766.8,302.6 767.0,300.3 767.2,299.1 767.4,296.4 767.6,290.7 767.8,284.8 768.0,278.8 768.2,236.3 768.5,237.0 768.7,236.6 768.9,253.7 769.1,253.7 769.3,254.1 769.5,254.2 769.7,253.5 769.9,253.6 770.1,253.7 770.3,254.2 770.5,253.2 770.8,254.6 771.0,253.8 771.2,273.3 771.4,294.2 771.6,295.4 771.8,297.2 772.0,297.8 772.2,299.9 772.4,300.8 772.7,301.8 772.9,303.2 773.1,303.5 773.3,305.2 773.5,306.0 773.7,306.8 773.9,307.8 774.1,308.6 774.3,309.4 774.5,310.7 774.8,311.8 774.8,312.0 775.0,312.0 775.2,311.6 775.4,312.0 775.6,311.8 775.8,312.0 776.0,312.2 776.2,311.8 776.4,312.4 776.6,312.1 776.9,311.7 777.1,312.5 777.3,312.2 777.5,312.7 777.7,312.4 777.9,312.7 778.1,312.4 778.3,312.5 778.5,312.3 778.7,311.9 779.0,312.3 779.2,312.2 779.4,312.5 779.6,312.6 779.8,312.8 780.0,313.1 780.2,312.6 780.4,312.1 780.6,312.5 780.8,312.8 781.0,312.2 781.3,312.9 781.5,313.0 781.7,313.2 781.9,313.1 782.1,312.9 782.3,311.3 782.5,311.1 782.7,310.4 782.9,309.3 783.2,308.3 783.4,307.8 783.6,306.3 783.8,305.2 784.0,305.0 784.2,304.7 784.4,304.9 784.6,304.8 784.8,303.6 785.0,303.4 785.2,303.9 785.5,303.1 785.7,302.9 785.9,302.5 786.1,302.3 786.3,302.2 786.5,302.5 786.7,302.9 786.9,303.4 787.1,304.4 787.4,305.2 787.6,304.9 787.8,305.6 788.0,305.5 788.2,305.7 788.4,306.3 788.6,306.9 788.7,306.9 788.8,306.8 789.0,307.8 789.2,307.7 789.5,308.2 789.7,308.7 789.9,308.8 790.1,309.8 790.3,309.7 790.5,310.7 790.7,311.1 790.9,311.6 791.1,311.5 791.3,312.3 791.5,312.4 791.8,313.2 792.0,312.5 792.2,312.3 792.4,312.8 792.6,312.4 792.8,312.7 793.0,312.2 793.2,312.8 793.4,313.3 793.7,312.4 793.9,312.9 794.1,313.2 794.3,313.1 794.5,313.4 794.7,312.9 794.9,313.2 795.0,312.4 795.1,311.5 795.3,310.2 795.5,308.1 795.8,305.8 796.0,304.2 796.2,301.7 796.4,275.4 796.6,249.5 796.8,249.4 797.0,249.1 797.2,248.8 797.4,248.8 797.6,249.2 797.9,250.5 798.1,252.4 798.3,253.6 798.5,255.5 798.7,256.5 798.9,275.8 799.1,294.4 799.3,297.0 799.5,299.6 799.6,301.3 799.7,301.9 800.0,303.2 800.2,304.7 800.4,306.5 800.6,307.7 800.8,309.3 801.0,308.9 801.2,309.2 801.4,309.9 801.6,310.2 801.8,309.6 802.0,309.4 802.3,309.8 802.5,309.7 802.7,310.2 802.9,310.6 803.1,310.0 803.3,310.3 803.5,310.2 803.7,310.9 803.9,310.6 804.2,310.9 804.4,310.6 804.6,311.1 804.8,311.2 805.0,311.3 805.2,310.8 805.4,311.3 805.6,311.6 805.8,311.9 806.0,312.2 806.2,311.7 806.5,313.0 806.7,313.0 806.9,312.8 807.1,312.9 807.3,313.6 807.5,313.5 807.7,313.8 807.9,314.0 808.1,314.6 808.4,314.4 808.6,315.1 808.8,314.9 809.0,316.0 809.2,315.6 809.4,316.6 809.6,316.9 809.8,316.6 810.0,317.2 810.2,317.1 810.5,317.8 810.5,317.1 810.7,317.6 810.9,318.0 811.1,317.6 811.3,317.4 811.5,318.0 811.7,317.6 811.9,317.2 812.1,317.6 812.3,317.9 812.5,318.1 812.8,317.8 813.0,318.5 813.2,318.9 813.4,318.3 813.6,318.4 813.8,317.6 814.0,318.1 814.2,318.5 814.4,318.6 814.7,318.1 814.9,318.6 815.1,318.5 815.3,318.4 815.5,318.4 815.7,318.4 815.9,318.5 816.1,318.2 816.3,318.1 816.5,319.1 816.8,317.9 817.0,318.7 817.2,318.4 817.4,319.0 817.6,318.7 817.8,318.8 818.0,318.8 818.2,318.6 818.4,318.7 818.6,319.2 818.9,319.0 819.1,318.8 819.3,318.8 819.5,319.2 819.7,319.2 819.9,319.2 820.1,319.5 820.3,319.6 820.5,318.7 820.7,319.3 821.0,319.2 821.2,319.5 821.4,318.9 821.6,318.8 821.8,319.4 822.0,319.2 822.2,319.6 822.4,318.9 822.6,319.2 822.8,319.7 823.0,319.2 823.3,319.4 823.5,319.5 823.7,319.5 823.9,319.8 824.1,319.8 824.3,319.5 824.5,319.7 824.7,320.0 824.9,319.2 825.2,319.9 825.4,320.0 825.6,320.1 825.8,319.7 826.0,319.6 826.2,319.9 826.4,319.7 826.6,320.4 826.8,320.1 827.0,320.2 827.2,320.1 827.5,320.0 827.7,320.7 827.9,319.2 828.1,320.5 828.3,320.1 828.5,320.0 828.7,320.0 828.9,320.2 829.1,321.2 829.4,320.7 829.6,320.2 829.8,320.7 830.0,320.8 830.2,321.2 830.4,320.1 830.6,320.4 830.8,320.8 831.0,320.6 831.2,320.6 831.5,321.0 831.7,320.8 831.9,320.6 832.1,320.6 832.3,320.4 832.5,320.8 832.7,320.9 832.9,320.7 833.1,321.1 833.3,321.3 833.5,320.6 833.8,321.1 834.0,320.8 834.2,320.5 834.4,320.8 834.6,320.2 834.8,320.1 835.0,320.1 835.2,319.8 835.4,320.0 835.7,320.3 835.9,319.5 836.1,319.6 836.3,318.9 836.5,318.9 836.7,319.0 836.9,314.6 837.1,309.9 837.3,305.8 837.5,301.7 837.8,301.7 838.0,301.9 838.2,301.9 838.4,307.3 838.6,313.2 838.8,318.8 839.0,319.5 839.2,320.1 839.4,320.4 839.6,320.4 839.9,320.2 840.1,320.6 840.3,321.2 840.5,321.4 840.7,320.7 840.9,320.8 841.1,321.4 841.3,320.6 841.5,320.9 841.7,320.6 842.0,320.9 842.2,320.7 842.4,320.9 842.6,321.2 842.8,321.0 843.0,321.2 843.2,320.7 843.4,321.3 843.6,321.4 843.8,320.8 844.0,320.6 844.3,320.5 844.5,320.6 844.7,321.4 844.9,321.2 845.1,321.1 845.3,321.0 845.5,321.6 845.7,321.0 845.9,320.9 846.2,321.3 846.4,320.9 846.6,320.6 846.8,321.0 847.0,320.7 847.2,320.7 847.4,320.9 847.6,320.9 847.8,321.1 848.0,320.6 848.2,321.1 848.5,321.2 848.7,320.8 848.9,321.2 849.1,320.9 849.3,320.7 849.5,321.0 849.7,321.0 849.9,320.7 850.1,320.8 850.4,321.5 850.6,321.4 850.8,320.6 851.0,320.9 851.2,321.6 851.4,321.4 851.6,321.0 851.8,321.3 852.0,320.9 852.2,321.0 852.5,320.9 852.7,321.3 852.9,320.8 853.1,320.4 853.3,321.2 853.5,320.6 853.7,320.7 853.9,320.8 854.1,321.0 854.3,321.4 854.5,321.3 854.8,320.8 855.0,320.7 855.2,320.6 855.4,320.7 855.6,320.7 855.8,321.1 856.0,321.4 856.2,320.9 856.4,320.9 856.7,321.0 856.9,321.5 857.1,321.2 857.3,321.5 857.5,321.0 857.7,321.3 857.9,321.1 858.1,320.9 858.3,321.0 858.5,320.6 858.8,321.3 859.0,321.7 859.2,320.7 859.4,320.6 859.6,320.6 859.8,320.9 860.0,320.9 860.2,321.0 860.4,321.4 860.6,321.2 860.9,320.9 861.1,321.2 861.3,320.5 861.5,321.5 861.7,321.2 861.9,320.7 862.1,321.2 862.3,321.4 862.5,321.4 862.7,321.3 863.0,320.6 863.2,320.9 863.4,320.9 863.6,321.2 863.8,320.8 864.0,321.0 864.2,321.3 864.4,321.2 864.6,321.0 864.8,320.7 865.0,321.1 865.3,320.9 865.5,320.4 865.7,321.3 865.9,321.4 866.1,320.7 866.3,320.9 866.5,321.1 866.7,321.0 866.9,321.1 867.2,320.9 867.4,321.1 867.6,320.8 867.8,321.4 868.0,321.3 868.2,321.0 868.4,321.2 868.6,320.8 868.8,321.1 869.0,321.2 869.2,321.0 869.5,321.2 869.7,321.5 869.9,321.4 870.1,321.3 870.3,321.2 870.5,321.0 870.7,320.8 870.9,320.9 871.1,320.5 871.4,320.7 871.6,321.1 871.8,320.6 872.0,320.7 872.2,321.2 872.4,321.0 872.6,320.7 872.8,321.0 873.0,320.8 873.2,320.9 873.5,320.9 873.7,321.2 873.9,321.0 874.1,321.2 874.3,320.9 874.5,321.6 874.7,321.0 874.9,320.7 875.1,320.9 875.3,321.1 875.5,320.9 875.8,321.3 876.0,321.3 876.2,321.2 876.4,321.1 876.6,320.8 876.8,321.3 877.0,320.8 877.2,321.6 877.4,321.3 877.7,321.1 877.9,320.7 878.1,321.3 878.3,321.7 878.5,321.0 878.7,321.1 878.9,321.4 879.1,321.4 879.3,321.3 879.5,321.1 879.8,320.9 880.0,321.5 880.2,320.4 880.4,321.1 880.6,321.2 880.8,320.9 881.0,321.1 881.2,320.4 881.4,320.8 881.6,321.2 881.9,321.2 882.1,321.3 882.3,321.2 882.5,320.9 882.7,321.3 882.9,320.6 883.1,321.1 883.3,321.2 883.5,320.8 883.7,321.7 884.0,321.4 884.2,320.9 884.4,321.1 884.6,321.1 884.8,321.0 885.0,321.3 885.2,321.2 885.4,321.5 885.6,321.7 885.8,320.7 886.0,321.4 886.3,321.3 886.5,320.7 886.7,320.8 886.9,321.3 887.1,321.3 887.3,321.1 887.5,321.4 887.7,321.0 887.9,321.1 888.2,321.1 888.4,320.9 888.6,320.9 888.8,320.6 889.0,320.7 889.2,321.6 889.4,320.9 889.6,321.5 889.8,321.6 890.0,320.9 890.2,321.3 890.5,321.2 890.7,320.8 890.9,321.3 891.1,321.4 891.3,321.0 891.5,320.8 891.7,321.0 891.9,321.6 892.1,321.3 892.4,321.2 892.6,320.6 892.8,320.9 893.0,320.9 893.2,320.8 893.4,321.2 893.6,321.0 893.8,321.0 894.0,321.4 894.2,321.2 894.5,321.0 894.7,321.5 894.9,320.9 895.1,320.9 895.3,320.8 895.5,321.4 895.7,321.1 895.9,320.7 896.1,320.9 896.3,321.4 896.5,321.1 896.8,320.7 897.0,321.2 897.2,321.0 897.4,320.4 897.6,321.2 897.8,321.2 898.0,321.5 898.2,321.4 898.4,320.7 898.7,321.2 898.9,321.5 899.1,321.4 899.3,321.2 899.5,320.9 899.7,321.4 899.9,321.0 900.1,321.3 900.3,321.1 900.5,321.0 900.8,321.0 901.0,321.3 901.2,321.2 901.4,321.0 901.6,321.6 901.8,321.1 902.0,321.0 902.2,320.9 902.4,321.2 902.6,321.2 902.9,321.1 903.1,321.4 903.3,321.3 903.5,321.1 903.7,321.1 903.9,321.5 904.1,321.3 904.3,321.8 904.5,321.0 904.7,321.4 905.0,321.1 905.2,321.5 905.4,321.2 905.6,321.1 905.8,320.9 906.0,321.6 906.2,321.0 906.4,321.3 906.6,321.4 906.8,321.1 907.0,321.3 907.3,321.3 907.5,321.4 907.7,321.2 907.9,321.2 908.1,321.3 908.3,321.5 908.5,321.4 908.7,321.1 908.9,320.8 909.2,321.2 909.4,320.8 909.6,321.2 909.8,321.6 910.0,321.0 910.2,321.5 910.4,321.1 910.6,320.9 910.8,321.3 911.0,321.3 911.2,320.5 911.5,321.2 911.7,321.2 911.9,321.0 912.1,321.3 912.3,321.3 912.5,321.1 912.7,322.0 912.9,320.8 913.1,321.6 913.4,321.6 913.6,321.1 913.8,321.2 914.0,321.6 914.2,321.2 914.4,321.6 914.6,321.5 914.8,321.7 915.0,321.5 915.2,321.1 915.5,321.2 915.7,321.2 915.9,321.0 916.1,321.3 916.3,321.4 916.5,321.3 916.7,320.8 916.9,321.2 917.1,321.2 917.3,321.3 917.5,321.2 917.8,321.1 918.0,321.3 918.2,321.3 918.4,321.5 918.6,321.5" fill="none" stroke="#e0e0e0" stroke-width="0.9"/><line x1="603.6" y1="325.1" x2="603.6" y2="328.1" stroke="#555" stroke-width="1"/><line x1="624.6" y1="325.1" x2="624.6" y2="328.1" stroke="#555" stroke-width="1"/><line x1="645.6" y1="325.1" x2="645.6" y2="328.1" stroke="#555" stroke-width="1"/><line x1="666.6" y1="325.1" x2="666.6" y2="328.1" stroke="#555" stroke-width="1"/><line x1="687.6" y1="325.1" x2="687.6" y2="328.1" stroke="#555" stroke-width="1"/><line x1="708.6" y1="325.1" x2="708.6" y2="328.1" stroke="#555" stroke-width="1"/><line x1="729.6" y1="325.1" x2="729.6" y2="328.1" stroke="#555" stroke-width="1"/><line x1="750.6" y1="325.1" x2="750.6" y2="328.1" stroke="#555" stroke-width="1"/><line x1="771.6" y1="325.1" x2="771.6" y2="328.1" stroke="#555" stroke-width="1"/><line x1="792.6" y1="325.1" x2="792.6" y2="328.1" stroke="#555" stroke-width="1"/><line x1="813.6" y1="325.1" x2="813.6" y2="328.1" stroke="#555" stroke-width="1"/><line x1="834.6" y1="325.1" x2="834.6" y2="328.1" stroke="#555" stroke-width="1"/><line x1="855.6" y1="325.1" x2="855.6" y2="328.1" stroke="#555" stroke-width="1"/><line x1="876.6" y1="325.1" x2="876.6" y2="328.1" stroke="#555" stroke-width="1"/><line x1="897.6" y1="325.1" x2="897.6" y2="328.1" stroke="#555" stroke-width="1"/><line x1="918.6" y1="325.1" x2="918.6" y2="328.1" stroke="#555" stroke-width="1"/></svg>
<div class="t c" style="left:588.6px;top:331.5px;width:30px;font-size:10px">150</div>
<div class="t c" style="left:609.6px;top:331.5px;width:30px;font-size:10px">200</div>
<div class="t c" style="left:630.6px;top:331.5px;width:30px;font-size:10px">250</div>
<div class="t c" style="left:651.6px;top:331.5px;width:30px;font-size:10px">300</div>
<div class="t c" style="left:672.6px;top:331.5px;width:30px;font-size:10px">350</div>
<div class="t c" style="left:693.6px;top:331.5px;width:30px;font-size:10px">400</div>
<div class="t c" style="left:714.6px;top:331.5px;width:30px;font-size:10px">450</div>
<div class="t c" style="left:735.6px;top:331.5px;width:30px;font-size:10px">500</div>
<div class="t c" style="left:756.6px;top:331.5px;width:30px;font-size:10px">550</div>
<div class="t c" style="left:777.6px;top:331.5px;width:30px;font-size:10px">600</div>
<div class="t c" style="left:798.6px;top:331.5px;width:30px;font-size:10px">650</div>
<div class="t c" style="left:819.6px;top:331.5px;width:30px;font-size:10px">700</div>
<div class="t c" style="left:840.6px;top:331.5px;width:30px;font-size:10px">750</div>
<div class="t c" style="left:861.6px;top:331.5px;width:30px;font-size:10px">800</div>
<div class="t c" style="left:882.6px;top:331.5px;width:30px;font-size:10px">850</div>
<div class="t c" style="left:903.6px;top:331.5px;width:30px;font-size:10px">900</div>
<div class="t c" style="left:711px;top:346.5px;width:100px;font-size:10px">Wavelength (nm)</div>
<div class="sb" style="left:553px;top:367px;width:45px;height:18px;line-height:17.5px;border-color:#909090;letter-spacing:0">Zoom</div>
<div class="sb" style="left:601px;top:367px;width:44px;height:18px;line-height:17.5px;border-color:#909090;letter-spacing:0">Pan</div>
<div class="sb" style="left:648px;top:367px;width:44px;height:18px;line-height:17.5px;border-color:#909090;letter-spacing:-0.4px">Full View</div>
<div class="rb" style="left:701px;top:367px;width:42px;height:17px;border:1px solid #404040;border-radius:2px;background:linear-gradient(#6c3c9c 0%,#8050a8 28%,#a4a4a4 40%,#b4b4b4 50%,#a4a4a4 58%,#8050a8 70%,#6c3c9c 100%);line-height:16px;font-size:9.5px;color:#222">R1</div>
<div class="rb" style="left:748px;top:367px;width:42px;height:17px;border:1px solid #404040;border-radius:2px;background:linear-gradient(#34588a 0%,#4a6a98 28%,#a4a4a4 40%,#b4b4b4 50%,#a4a4a4 58%,#4a6a98 70%,#34588a 100%);line-height:16px;font-size:9.5px;color:#222">R2</div>
<div class="rb" style="left:794px;top:367px;width:42px;height:17px;border:1px solid #404040;border-radius:2px;background:linear-gradient(#24883c 0%,#3a9a4c 28%,#a4a4a4 40%,#b4b4b4 50%,#a4a4a4 58%,#3a9a4c 70%,#24883c 100%);line-height:16px;font-size:9.5px;color:#222">R3</div>
<div class="rb" style="left:841px;top:367px;width:42px;height:17px;border:1px solid #404040;border-radius:2px;background:linear-gradient(#a09a38 0%,#b0aa48 28%,#a4a4a4 40%,#b4b4b4 50%,#a4a4a4 58%,#b0aa48 70%,#a09a38 100%);line-height:16px;font-size:9.5px;color:#222">R4</div>
<div class="rb" style="left:889px;top:367px;width:42px;height:17px;border:1px solid #404040;border-radius:2px;background:linear-gradient(#9c1424 0%,#b02838 28%,#a4a4a4 40%,#b4b4b4 50%,#a4a4a4 58%,#b02838 70%,#9c1424 100%);line-height:16px;font-size:9.5px;color:#222">R5</div>
<div class="t" style="left:625px;top:411px">Species</div>
<div class="ind" style="left:662px;top:406px;width:184px;height:19px;text-align:left;padding-left:4px;line-height:17px;background:#eeeeee;letter-spacing:-0.2px">H (434.0), N2 (434.4)</div>
<!-- processed group -->
<div class="grp" style="left:527px;top:452px;width:428px;height:244px"></div>
<div class="sb" style="left:533px;top:459px;width:105px;height:18px;line-height:17.5px;border-color:#909090">Switch to Workbench</div>
<div class="sb" style="left:850px;top:459px;width:91px;height:18px;line-height:17.5px;border-color:#3c6488;border-radius:3px;background:linear-gradient(#e4f2fb,#c8e4f6 48%,#8cc4ec 52%,#7cb8e6)">Display Signals</div>
<div class="t c" style="left:565px;top:500px;width:80px">Raw</div>
<div class="t c" style="left:637px;top:500px;width:80px">Smoothed</div>
<div class="t c" style="left:710px;top:500px;width:80px">Differential</div>
<div class="t c" style="left:782px;top:500px;width:80px">Envelope</div>
<div class="t c" style="left:855px;top:488px;width:80px">Envelope<br>Slope</div>
<div class="ind" style="left:572px;top:513px;width:64px;height:18px;line-height:17.5px">467.057</div>
<div class="ind" style="left:645px;top:513px;width:64px;height:18px;line-height:17.5px">464.121</div>
<div class="ind" style="left:718px;top:513px;width:64px;height:18px;line-height:17.5px">-0.008</div>
<div class="ind" style="left:791px;top:513px;width:64px;height:18px;line-height:17.5px">467.234</div>
<div class="ind" style="left:864px;top:513px;width:64px;height:18px;line-height:17.5px">-0.000</div>
<div class="t b" style="left:537px;top:539px;font-size:9.5px">Processed Data</div>
<svg class="a" style="left:590px;top:550px" width="300" height="125" viewBox="590 550 300 125"><rect x="599.5" y="559.3" width="278.3" height="102.9" fill="#000"/><line x1="599.5" y1="560.6" x2="877.8" y2="560.6" stroke="#7c6c48" stroke-width="2"/><line x1="599.5" y1="629.9" x2="877.8" y2="629.9" stroke="#6aaa44" stroke-width="1.4"/><line x1="599.5" y1="640" x2="877.8" y2="640" stroke="#8c2a28" stroke-width="1.6"/><line x1="599.5" y1="642.4" x2="877.8" y2="642.4" stroke="#3a6ca8" stroke-width="1.1"/><line x1="599.5" y1="646.1" x2="877.8" y2="646.1" stroke="#6c3c9c" stroke-width="1.5"/><circle cx="636.5" cy="641" r="0.75" fill="#a89898"/><circle cx="655.8" cy="641" r="0.75" fill="#a89898"/><circle cx="667" cy="641" r="0.75" fill="#a89898"/><circle cx="706" cy="641" r="0.75" fill="#a89898"/><circle cx="734" cy="641" r="0.75" fill="#a89898"/><circle cx="758" cy="641" r="0.75" fill="#a89898"/><circle cx="790" cy="641" r="0.75" fill="#a89898"/><circle cx="806" cy="641" r="0.75" fill="#a89898"/><circle cx="826" cy="641" r="0.75" fill="#a89898"/><circle cx="845" cy="641" r="0.75" fill="#a89898"/><circle cx="866" cy="641" r="0.75" fill="#a89898"/><circle cx="650" cy="560.5" r="1" fill="#a8c840"/><circle cx="790" cy="629.5" r="1" fill="#a8d860"/><line x1="599.5" y1="662" x2="599.5" y2="666" stroke="#333"/><line x1="877.5" y1="662" x2="877.5" y2="666" stroke="#333"/></svg>
<div class="t" style="right:429px;top:555.5px;text-align:right">3000</div>
<div class="t" style="right:429px;top:572.3px;text-align:right">2500</div>
<div class="t" style="right:429px;top:589.0px;text-align:right">2000</div>
<div class="t" style="right:429px;top:605.8px;text-align:right">1500</div>
<div class="t" style="right:429px;top:622.7px;text-align:right">1000</div>
<div class="t" style="right:429px;top:639.3px;text-align:right">500</div>
<div class="t" style="right:429px;top:656.0px;text-align:right">0</div>
<div class="t" style="left:885px;top:555.5px">0.5</div>
<div class="t" style="left:885px;top:575.5px">0.25</div>
<div class="t" style="left:885px;top:595.0px">0</div>
<div class="t" style="left:885px;top:614.5px">-0.25</div>
<div class="t" style="left:885px;top:636.0px">-0.5</div>
<div class="t" style="left:885px;top:657.0px">-0.75</div>
<div class="t b" style="left:516px;top:604px;width:100px;text-align:center;transform:rotate(-90deg)">Smoothed / <span style="color:#e8801a">Envelope</span></div>
<div class="t b" style="left:857px;top:605px;width:120px;text-align:center;transform:rotate(90deg)"><span style="color:#3a90d0">Diff /</span> <span style="color:#e050a0">Envelope Slope</span></div>
<div class="t c" style="left:584px;top:669px;width:30px">0</div>
<div class="t c" style="left:862px;top:669px;width:30px">100</div>
<div class="t b c" style="left:699px;top:684px;width:80px">Sample #</div>
</body></html>
